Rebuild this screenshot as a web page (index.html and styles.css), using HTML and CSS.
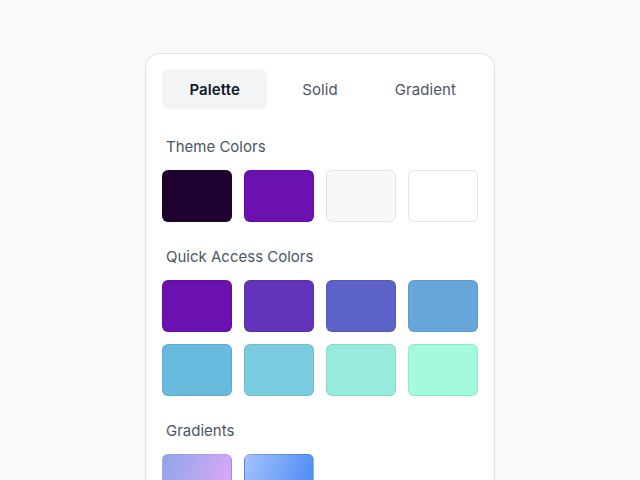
FILE: index.html
```html
<!DOCTYPE html>
<html>
<head>
<meta charset="utf-8">
<link rel="stylesheet" href="styles.css">
</head>
<body>
<div class="card">
  <div class="tabs">
    <div class="tab active">Palette</div>
    <div class="tab">Solid</div>
    <div class="tab">Gradient</div>
  </div>
  <div class="section first">
    <div class="label">Theme Colors</div>
    <div class="grid">
      <div class="sw" style="background:#1e0230"></div>
      <div class="sw" style="background:#6a11b0"></div>
      <div class="sw light" style="background:#f8f8f8"></div>
      <div class="sw light" style="background:#ffffff"></div>
    </div>
  </div>
  <div class="section">
    <div class="label">Quick Access Colors</div>
    <div class="grid">
      <div class="sw" style="background:#6a11b0"></div>
      <div class="sw" style="background:#6233bb"></div>
      <div class="sw" style="background:#5d62c8"></div>
      <div class="sw" style="background:#67a6d9"></div>
      <div class="sw" style="background:#69badf"></div>
      <div class="sw" style="background:#79cbdf"></div>
      <div class="sw" style="background:#96ebdd"></div>
      <div class="sw" style="background:#a3fbdc"></div>
    </div>
  </div>
  <div class="section">
    <div class="label">Gradients</div>
    <div class="grid">
      <div class="sw" style="background:linear-gradient(110deg,#8ea6e8,#e2a7fb)"></div>
      <div class="sw" style="background:linear-gradient(110deg,#a3c3fb,#4784f5)"></div>
    </div>
  </div>
</div>
</body>
</html>
```

FILE: styles.css
```css
html, body {
  margin: 0;
  padding: 0;
  background: #f8f9fb;
  font-family: Inter, "Liberation Sans", sans-serif;
  height: 480px;
  overflow: hidden;
}
body {
  display: flex;
  justify-content: center;
  padding-top: 53px;
}
.card {
  width: 350px;
  height: 500px;
  box-sizing: border-box;
  background: #fff;
  border: 1px solid #e2e4e8;
  border-radius: 14px;
  box-shadow: 0 1px 3px rgba(0,0,0,0.05);
  padding: 15px 16px 16px 16px;
}
.tabs {
  display: grid;
  grid-template-columns: 1fr 1fr 1fr;
  height: 40px;
}
.tab {
  display: flex;
  align-items: center;
  justify-content: center;
  font-size: 15px;
  color: #4b5563;
  border-radius: 6px;
  letter-spacing: 0.1px;
}
.tab.active {
  background: #f3f4f6;
  color: #111827;
  font-weight: 600;
}
.section {
  margin-top: 24px;
}
.section.first {
  margin-top: 27px;
}
.label {
  font-size: 15px;
  line-height: 20px;
  color: #4b5563;
  padding-left: 4px;
  padding-top: 1px;
  margin-bottom: 13px;
}
.grid {
  display: grid;
  grid-template-columns: repeat(4, 1fr);
  gap: 12px;
}
.sw {
  height: 52px;
  border-radius: 6px;
  box-sizing: border-box;
  border: 1px solid rgba(0,0,0,0.08);
}
.sw.light {
  border-color: #e3e4ea;
}
```
